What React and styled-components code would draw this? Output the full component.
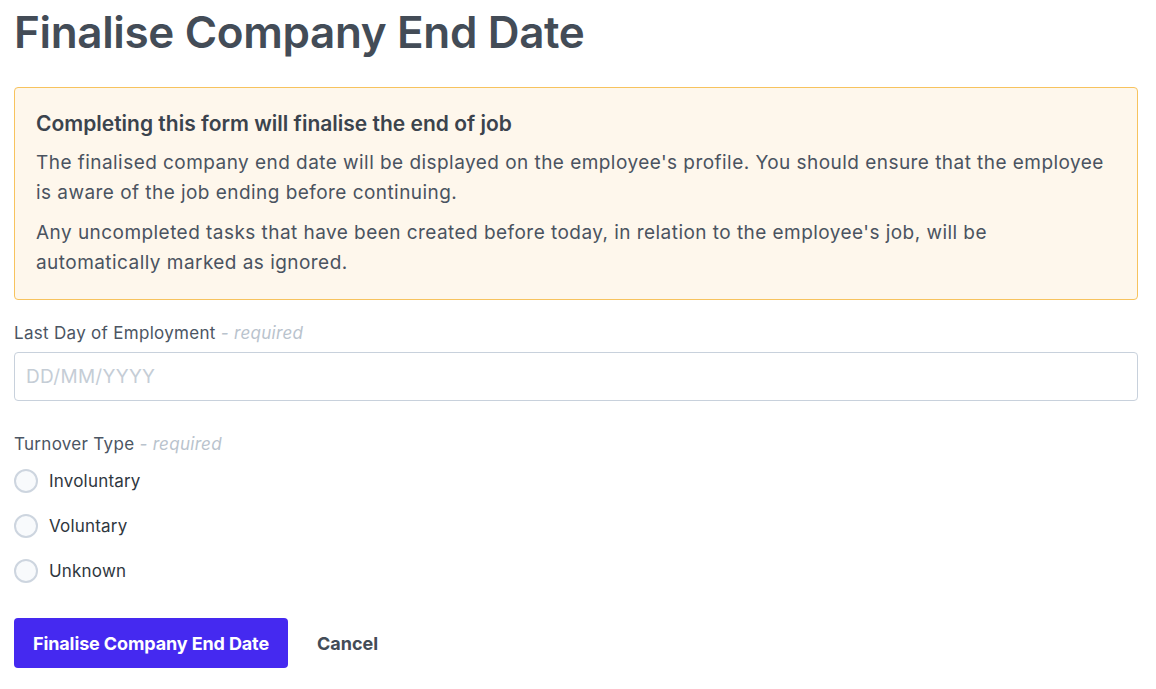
import React, {useState} from "react";
import styled, {createGlobalStyle} from "styled-components";

const Global = createGlobalStyle`
body {
    margin: 0;
    background: #fff;
    font-family: Inter, "Noto Sans", sans-serif;
    color: #414b57;
}
* { box-sizing: border-box; }
`

const Page = styled.div`
padding: 0 18px 0 14px;
`

const Title = styled.h1`
margin: 0;
padding-top: 7px;
font-size: 44px;
line-height: 50px;
font-weight: 600;
color: #434c57;
letter-spacing: -0.35px;
`

const Alert = styled.div`
margin-top: 30px;
background: #fef7ec;
border: 1px solid #f7c35e;
border-radius: 4px;
padding: 21px 20px 21px 21px;
`

const AlertHead = styled.div`
font-size: 21px;
line-height: 30px;
font-weight: 600;
color: #3b434d;
margin-bottom: 9px;
`

const AlertText = styled.p`
margin: 0;
font-size: 19px;
letter-spacing: 0.45px;
line-height: 30px;
color: #4a5360;
& + & { margin-top: 10px; }
`

const Field = styled.div`
margin-top: ${p => p.gap}px;
`

const Label = styled.div`
font-size: 17px;
letter-spacing: 0.3px;
line-height: 24px;
color: #4b5563;
`

const Req = styled.span`
font-style: italic;
color: #b9c3cd;
`

const Input = styled.input`
display: block;
width: 100%;
height: 49px;
margin-top: 7px;
border: 1px solid #c8d1dc;
border-radius: 4px;
padding: 0 11px;
font-family: inherit;
font-size: 19px;
letter-spacing: 0.3px;
color: #414b57;
outline: none;
&::placeholder { color: #c5cdd6; }
`

const Options = styled.div`
display: flex;
flex-direction: column;
gap: 21px;
margin-top: 13px;
`

const Option = styled.label`
display: flex;
align-items: center;
gap: 11px;
font-size: 17px;
letter-spacing: 0.2px;
line-height: 24px;
color: #2f3740;
cursor: pointer;
`

const Dot = styled.span`
width: 24px;
height: 24px;
border-radius: 50%;
border: 2px solid ${p => p.on ? "#4529f0" : "#cdd5df"};
background: ${p => p.on ? "#4529f0" : "#f8fafc"};
box-shadow: ${p => p.on ? "inset 0 0 0 4px #fff" : "none"};
flex: none;
`

const Actions = styled.div`
display: flex;
align-items: center;
gap: 29px;
margin-top: 35px;
`

const Primary = styled.button`
height: 50px;
padding: 0 19px;
background: #4529f0;
color: #fff;
border: none;
border-radius: 4px;
font-family: inherit;
font-size: 18px;
letter-spacing: -0.12px;
font-weight: 700;
cursor: pointer;
`

const Cancel = styled.button`
background: none;
border: none;
padding: 0;
font-family: inherit;
font-size: 18px;
font-weight: 700;
color: #434c57;
cursor: pointer;
`

const types = ["Involuntary", "Voluntary", "Unknown"];

export default function App() {
    const [type, setType] = useState(null);
    return (
        <Page>
            <Global />
            <Title>Finalise Company End Date</Title>
            <Alert>
                <AlertHead>Completing this form will finalise the end of job</AlertHead>
                <AlertText>The finalised company end date will be displayed on the employee's profile. You should ensure that the employee is aware of the job ending before continuing.</AlertText>
                <AlertText>Any uncompleted tasks that have been created before today, in relation to the employee's job, will be automatically marked as ignored.</AlertText>
            </Alert>
            <Field gap={21}>
                <Label>Last Day of Employment <Req>- required</Req></Label>
                <Input placeholder="DD/MM/YYYY" />
            </Field>
            <Field gap={31}>
                <Label>Turnover Type <Req>- required</Req></Label>
                <Options>
                    {types.map(t => (
                        <Option key={t} onClick={() => setType(t)}>
                            <Dot on={type === t} />
                            {t}
                        </Option>
                    ))}
                </Options>
            </Field>
            <Actions>
                <Primary>Finalise Company End Date</Primary>
                <Cancel>Cancel</Cancel>
            </Actions>
        </Page>
    );
}
